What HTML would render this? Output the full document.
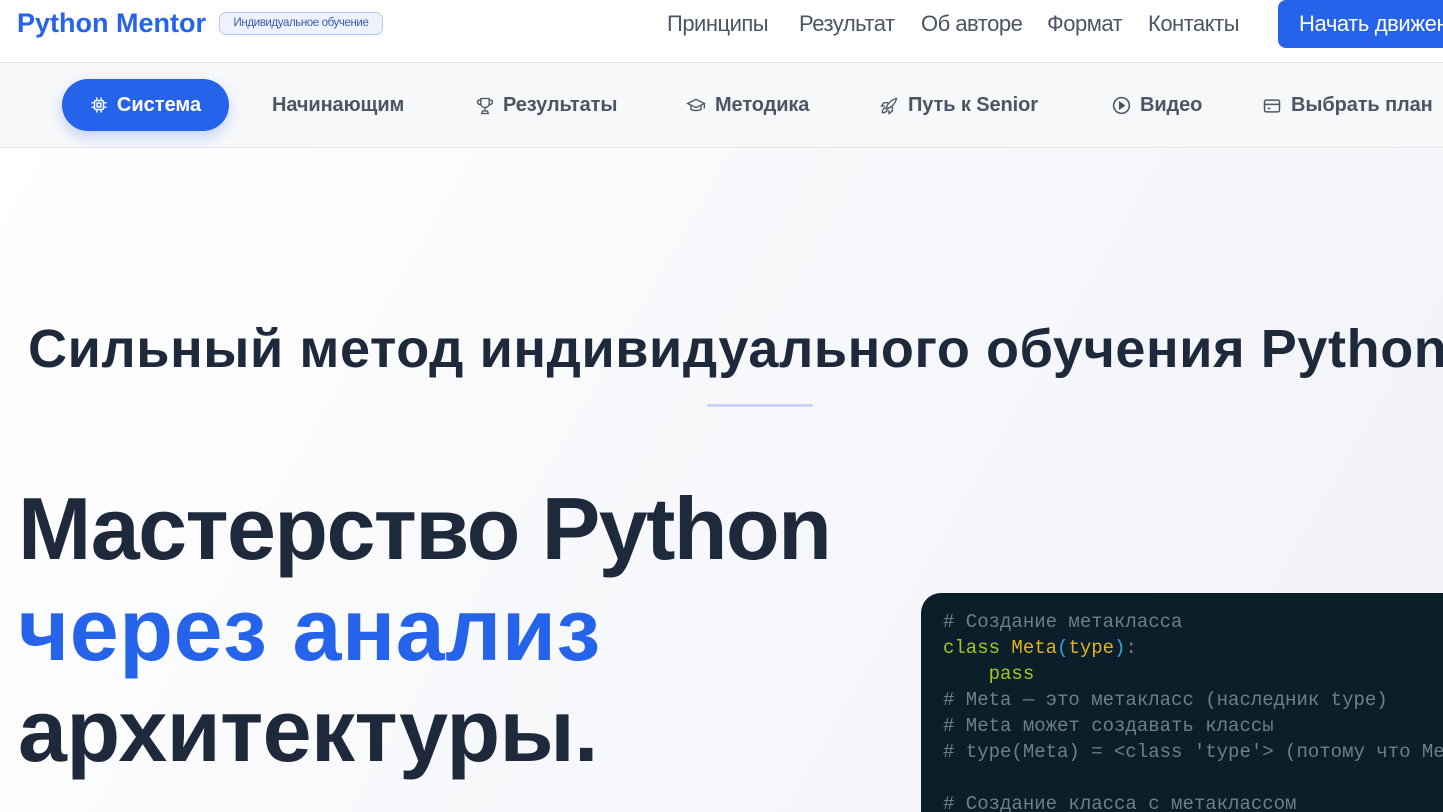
<!DOCTYPE html>
<html style="overflow:hidden;height:812px"><head><meta charset="utf-8"><style>
*{margin:0;padding:0;box-sizing:border-box}
body{width:1443px;height:812px;overflow:hidden;font-family:"Liberation Sans","DejaVu Sans",sans-serif;background:#fff;position:relative}
.top{position:absolute;left:0;top:0;width:1443px;height:63px;background:#fff;border-bottom:1px solid #e2e5ea}
.logo{position:absolute;left:17px;top:8px;font-size:27px;font-weight:bold;color:#2563eb;letter-spacing:0}
.badge{position:absolute;left:219px;top:12px;width:164px;height:23px;border:1px solid #b9c8f0;background:#eef2fd;border-radius:7px;font-size:11.5px;color:#3b5bb5;text-align:center;line-height:21px;letter-spacing:-0.4px}
.nav a{position:absolute;top:11px;font-size:22px;color:#4b5563;text-decoration:none;letter-spacing:-0.5px}
.btn{position:absolute;left:1278px;top:0;width:190px;height:48px;background:#2563eb;border-radius:8px;color:#fff;font-size:22px;line-height:48px;padding-left:21px;white-space:nowrap;letter-spacing:-0.4px}
.sub{position:absolute;left:0;top:63px;width:1443px;height:85px;background:#f7f8fa;border-bottom:1px solid #e2e5ea}
.it{position:absolute;top:31px;font-size:20px;font-weight:bold;color:#4b5563;white-space:nowrap;display:flex;align-items:center;gap:8px;letter-spacing:-0.1px}
.pill{position:absolute;left:62px;top:16px;width:167px;height:52px;background:#2563eb;border-radius:26px;box-shadow:0 6px 14px rgba(37,99,235,.25);color:#fff;font-size:20px;font-weight:bold;display:flex;align-items:center;justify-content:center;gap:9px}
.hero{position:absolute;left:0;top:149px;width:1443px;height:663px;background:linear-gradient(120deg,#fff 0%,#f7f8fb 50%,#f1f3f8 100%)}
h2{position:absolute;left:28px;top:318px;font-size:54px;font-weight:bold;color:#1e293b;white-space:nowrap;letter-spacing:0.6px}
.line{position:absolute;left:707px;top:404px;width:106px;height:3px;background:#c7d4f5;border-radius:2px}
h1{position:absolute;left:18px;top:478px;font-size:88px;font-weight:bold;color:#1e293b;line-height:101px;letter-spacing:-0.6px;white-space:nowrap}
h1 .a{letter-spacing:-1.6px}
h1 span.b{color:#2563eb;letter-spacing:0.6px}
.code{position:absolute;left:921px;top:593px;width:560px;height:219px;overflow:hidden;background:#0a1f2a;border-radius:20px 0 0 0;padding:16px 0 0 22px;font-family:"Liberation Mono","DejaVu Sans Mono",monospace;font-size:19px;line-height:26px;color:#6f7f88;white-space:pre}
.k{color:#a9c41e}.f{color:#e3b21c}.p{color:#3aa0d9}
</style></head><body>
<div class="top">
<div class="logo">Python Mentor</div>
<div class="badge">Индивидуальное обучение</div>
<div class="nav">
<a style="left:667px">Принципы</a><a style="left:799px">Результат</a><a style="left:921px">Об авторе</a><a style="left:1047px">Формат</a><a style="left:1148px">Контакты</a>
</div>
<div class="btn">Начать движение</div>
</div>
<div class="sub">
<div class="pill"><svg width="18" height="18" viewBox="0 0 24 24" fill="none" stroke="#fff" stroke-width="2"><rect x="6" y="6" width="12" height="12" rx="2"/><rect x="9.5" y="9.5" width="5" height="5"/><path d="M9 2v3M15 2v3M9 19v3M15 19v3M2 9h3M2 15h3M19 9h3M19 15h3"/></svg>Система</div>
<div class="it" style="left:272px">Начинающим</div>
<div class="it" style="left:475px"><svg width="20" height="20" viewBox="0 0 24 24" fill="none" stroke="#4b5563" stroke-width="1.6"><path d="M7 3h10v6a5 5 0 0 1-10 0z"/><path d="M7 5H4a3 3 0 0 0 3 5M17 5h3a3 3 0 0 1-3 5M12 14v4M8 21h8l-1-3H9z"/></svg>Результаты</div>
<div class="it" style="left:685px"><svg width="22" height="20" viewBox="0 0 24 24" fill="none" stroke="#4b5563" stroke-width="1.6"><path d="M2 9l10-5 10 5-10 5z"/><path d="M6 11v5c3 2 9 2 12 0v-5M22 9v6"/></svg>Методика</div>
<div class="it" style="left:878px"><svg width="22" height="20" viewBox="0 0 24 24" fill="none" stroke="#4b5563" stroke-width="1.6"><path d="M4 20c0-3 1-5 3-6l3 3c-1 2-3 3-6 3zM9 13c3-6 7-9 12-10-1 5-4 9-10 12zM15 8.5h.01M7 12H3l3-4h5M12 17v4l4-3v-5"/></svg>Путь к Senior</div>
<div class="it" style="left:1111px"><svg width="21" height="21" viewBox="0 0 24 24" fill="none" stroke="#4b5563" stroke-width="1.8"><circle cx="12" cy="12" r="9"/><path d="M10 8.5l5 3.5-5 3.5z" fill="#4b5563"/></svg>Видео</div>
<div class="it" style="left:1261px"><svg width="22" height="20" viewBox="0 0 24 24" fill="none" stroke="#4b5563" stroke-width="1.8"><rect x="3" y="5" width="18" height="14" rx="2"/><path d="M3 10h18M7 15h3"/></svg>Выбрать план</div>
</div>
<div class="hero"></div>
<h2>Сильный метод индивидуального обучения Python</h2>
<div class="line"></div>
<h1><span class="a">Мастерство Python</span><br><span class="b">через анализ</span><br>архитектуры.</h1>
<div class="code"># Создание метакласса
<span class="k">class</span> <span class="f">Meta</span><span class="p">(</span><span class="f">type</span><span class="p">)</span>:
    <span class="k">pass</span>
# Meta — это метакласс (наследник type)
# Meta может создавать классы
# type(Meta) = &lt;class 'type'&gt; (потому что Meta

# Создание класса с метаклассом</div>
</body></html>
